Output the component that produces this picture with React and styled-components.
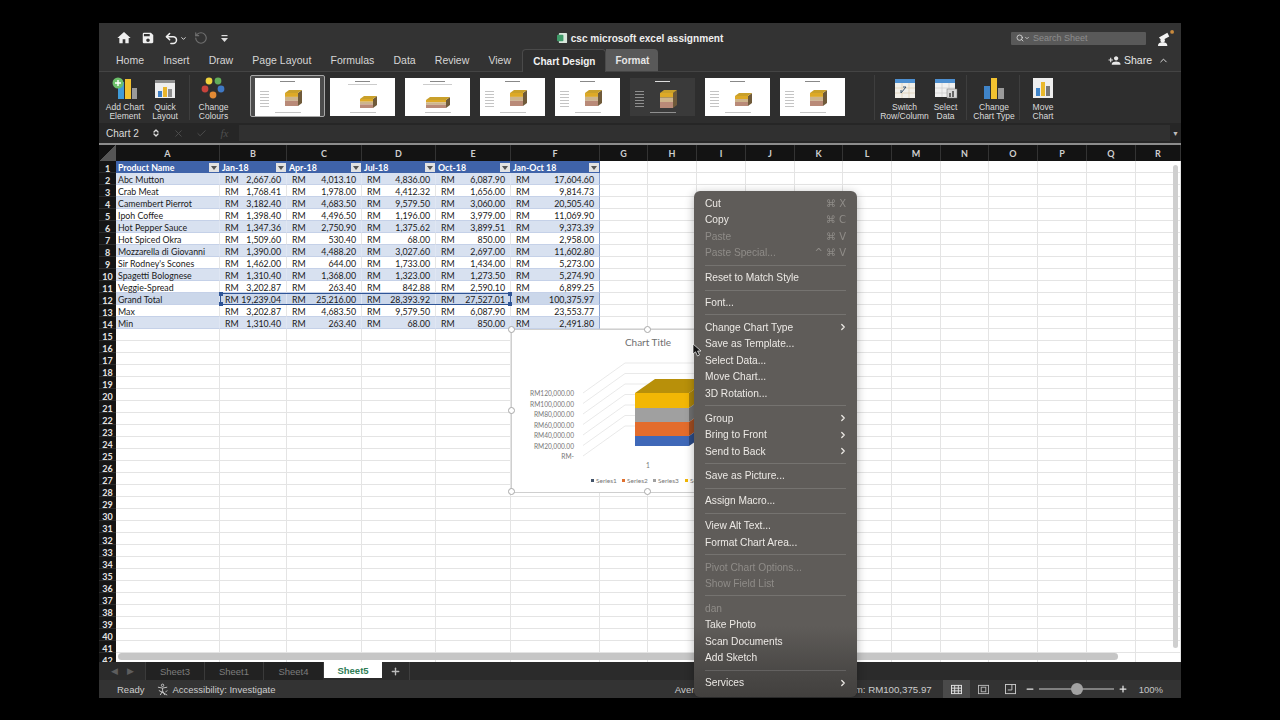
import React from "react";
import styled, { createGlobalStyle } from "styled-components";
import { ChevronRight, ChevronUp, ChevronDown, Plus, Minus, Search, X, Check, Undo2, RotateCcw } from "lucide-react";
import { MdHome, MdSave, MdPersonAdd } from "react-icons/md";

const GlobalStyle = createGlobalStyle`
  html, body {
    margin: 0;
    background: #000;
    overflow: hidden;
  }
  * { box-sizing: border-box; }
`;

const Page = styled.div`
  width: 1280px;
  height: 720px;
  padding: 23px 99px 22px;
  background: #000;
  font-family: "Liberation Sans", Arial, sans-serif;
`;

const Window = styled.div`
  position: relative;
  display: flex;
  flex-direction: column;
  height: 675px;
  background: #2e2e2e;
  filter: blur(0.45px);
`;

// title bar
const TitleBar = styled.div`
  display: grid;
  grid-template-columns: 1fr auto 1fr;
  align-items: center;
  height: 26px;
  padding-top: 4px;
  background: #333;
  color: #eee;
`;

const QuickIcons = styled.div`
  display: flex;
  align-items: center;
  padding-left: 17px;
`;

const QuickBtn = styled.span`
  display: flex;
  align-items: center;
  color: ${(p) => (p.$dim ? "#6f6f6f" : "#f0f0f0")};
  margin-right: ${(p) => p.$gap || 0}px;
`;

const Title = styled.div`
  display: flex;
  align-items: center;
  gap: 3px;
  font-size: 10.1px;
  font-weight: 700;
  color: #eee;
`;

const TitleRight = styled.div`
  display: flex;
  justify-content: flex-end;
  align-items: center;
  padding-right: 6px;
`;

const SearchBox = styled.div`
  display: flex;
  align-items: center;
  width: 135px;
  height: 13px;
  margin-right: 10px;
  padding-left: 5px;
  background: #595959;
  border-radius: 1px;
  color: #ddd;
  font-size: 9px;
  span {
    margin-left: 3px;
    color: #8d8d8d;
  }
`;

// tab row
const TabRow = styled.div`
  display: flex;
  align-items: stretch;
  height: 23px;
  background: #333;
  border-bottom: 1px solid #444;
  padding-left: 17px;
  font-size: 10.5px;
  color: #d6d6d6;
`;

const Tab = styled.div`
  display: flex;
  align-items: center;
  margin-right: 19.2px;
`;

const ActiveTab = styled.div`
  display: flex;
  align-items: center;
  height: 23px;
  margin-left: -8px;
  padding: 0 10px;
  background: #2e2e2e;
  border: 1px solid #4a4a4a;
  border-bottom: none;
  border-radius: 4px 4px 0 0;
  color: #f2f2f2;
  font-weight: 700;
  font-size: 10px;
`;

const ContextTab = styled.div`
  display: flex;
  align-items: center;
  height: 22px;
  padding: 0 9px;
  background: #595959;
  border-radius: 0 4px 0 0;
  color: #e6e6e6;
  font-weight: 700;
  font-size: 10px;
`;

const ShareBox = styled.div`
  margin-left: auto;
  padding-right: 12px;
  display: flex;
  align-items: center;
  gap: 3px;
  color: #e8e8e8;
  font-size: 10.5px;
`;

// ribbon
const Ribbon = styled.div`
  display: flex;
  height: 51px;
  background: #2e2e2e;
`;

const RibbonBtn = styled.div`
  width: ${(p) => p.$w}px;
  display: flex;
  flex-direction: column;
  align-items: center;
  padding-top: 5px;
  color: #dcdcdc;
  font-size: 8.5px;
  line-height: 9px;
  text-align: center;
  white-space: nowrap;
  svg {
    display: block;
    height: 22px;
    margin-bottom: 4px;
  }
`;

const RibbonSep = styled.div`
  width: 1px;
  height: 45px;
  margin: 3px ${(p) => p.$r || 0}px 0 ${(p) => p.$l || 0}px;
  background: #3e3e3e;
`;

const Gallery = styled.div`
  display: flex;
  align-items: flex-start;
  padding-top: 3px;
  margin-left: 13px;
  margin-right: 24px;
  background: #2e2e2e;
`;

const ThumbCell = styled.div`
  width: 75px;
  height: 42px;
  padding: 2px 4px;
  border-radius: 2px;
  border: 1px solid ${(p) => (p.$on ? "#a8a8a8" : "transparent")};
  background: ${(p) => (p.$on ? "#4c4c4c" : "transparent")};
  svg {
    display: block;
    width: 65px;
    height: 38px;
  }
`;

// formula bar
const FormulaBar = styled.div`
  display: flex;
  align-items: center;
  height: 22px;
  background: #262626;
  border-bottom: 2px solid #8c8c8c;
`;

const NameBox = styled.div`
  width: 53px;
  padding-left: 7px;
  font-size: 10px;
  color: #dcdcdc;
`;

const Spinner = styled.div`
  display: flex;
  flex-direction: column;
  width: 15px;
  color: #ddd;
  svg {
    margin: -2px 0;
  }
`;

const FxBtn = styled.span`
  display: flex;
  justify-content: center;
  width: 23px;
  color: #4f4f4f;
  font-family: "Liberation Serif", serif;
  font-style: italic;
  font-size: 11px;
`;

const FormulaInput = styled.div`
  flex: 1;
  height: 16px;
  margin-left: 3px;
  background: #303030;
`;

const FormulaCaret = styled.div`
  width: 11px;
  text-align: center;
  color: #bdbdbd;
  font-size: 7px;
`;

// sheet
const Sheet = styled.div`
  position: relative;
  flex: 1;
  overflow: hidden;
  display: grid;
  grid-template-columns: 17px 104px 67px 75px 74px 75px 89px 48px 49px 49px 49px 48px 49px 49px 48px 49px 49px 49px 45px;
  grid-template-rows: 16px;
  grid-auto-rows: 12px;
  background: #fff;
  font-family: Lato, "Liberation Sans", sans-serif;
`;

const Corner = styled.div`
  background: linear-gradient(135deg, #111 50%, #555 50%);
`;

const ColHead = styled.div`
  display: flex;
  align-items: center;
  justify-content: center;
  background: #131313;
  border-right: 1px solid #333;
  color: #cfcfcf;
  font-size: 9px;
  font-weight: 700;
`;

const RowHead = styled.div`
  display: flex;
  align-items: center;
  justify-content: center;
  padding-top: 3px;
  background: #151515;
  border-bottom: 1px solid #2c2c2c;
  color: #e4e4e4;
  font-size: 9px;
  font-weight: 700;
  line-height: 1;
`;

const Blank = styled.div`
  border-right: 1px solid #e4e4e4;
  border-bottom: 1px solid #e4e4e4;
`;

const Cell = styled.div`
  display: flex;
  align-items: center;
  justify-content: space-between;
  padding: 3px ${(p) => (p.$money ? 5 : 2)}px 0;
  background: ${(p) => (p.$tone === "sel" ? "#cbd7ea" : p.$tone === "band" ? "#d8e1f0" : "#fff")};
  border-right: 1px solid ${(p) => (p.$edge ? "#8ea6d4" : p.$tone === "plain" ? "#e6e6e6" : "#dfe6f3")};
  border-bottom: 1px solid #c5d1e8;
  color: #1a1a1a;
  font-size: 8.8px;
  line-height: 1;
  white-space: nowrap;
`;

const HeadCell = styled.div`
  position: relative;
  display: flex;
  align-items: center;
  padding: 1px 0 0 2px;
  background: #3f63a9;
  color: #fff;
  font-size: 8.8px;
  font-weight: 700;
  white-space: nowrap;
`;

const FilterBtn = styled.span`
  position: absolute;
  top: 2px;
  right: 1px;
  width: 10px;
  height: 9px;
  background: #e2e2e2;
  &::after {
    content: "";
    position: absolute;
    left: 2px;
    top: 3px;
    border: 3px solid transparent;
    border-top: 4px solid #555;
  }
`;

const Selection = styled.div`
  position: absolute;
  left: 121px;
  top: 148px;
  width: 291px;
  height: 12px;
  border: 1px solid #2f5597;
`;

const SelDot = styled.span`
  position: absolute;
  width: 4px;
  height: 4px;
  background: #2f5597;
  left: ${(p) => (p.$right ? "auto" : "-2px")};
  right: ${(p) => (p.$right ? "-2px" : "auto")};
  top: ${(p) => (p.$bottom ? "auto" : "-2px")};
  bottom: ${(p) => (p.$bottom ? "-2px" : "auto")};
`;

const ChartBox = styled.div`
  position: absolute;
  left: 412px;
  top: 184px;
  width: 274px;
  height: 164px;
  background: #fff;
  border: 1px solid #cfcfcf;
  svg {
    display: block;
  }
`;

const Handle = styled.span`
  position: absolute;
  width: 7px;
  height: 7px;
  margin: -4px 0 0 -4px;
  left: ${(p) => p.$x}%;
  top: ${(p) => p.$y}%;
  background: #fff;
  border: 1px solid #a8a8a8;
  border-radius: 50%;
`;

const HScroll = styled.div`
  position: absolute;
  left: 19px;
  bottom: 2px;
  width: 1000px;
  height: 7px;
  border-radius: 4px;
  background: #c6c6c6;
`;

const VScroll = styled.div`
  position: absolute;
  right: 3px;
  top: 20px;
  width: 5px;
  height: 483px;
  border-radius: 3px;
  background: #cfcfcf;
`;

// sheet tabs
const SheetTabs = styled.div`
  display: flex;
  height: 18px;
  background: #2b2b2b;
  font-size: 9.5px;
  color: #7c7c7c;
`;

const TabNav = styled.div`
  width: 46px;
  display: flex;
  align-items: center;
  justify-content: center;
  gap: 9px;
  color: #5d5d5d;
  font-size: 9px;
`;

const SheetTab = styled.div`
  width: ${(p) => p.$w}px;
  display: flex;
  align-items: center;
  justify-content: center;
  height: ${(p) => (p.$on ? 16 : 18)}px;
  background: ${(p) => (p.$on ? "#fff" : "#222")};
  color: ${(p) => (p.$on ? "#2f7d55" : "#7c7c7c")};
  font-weight: ${(p) => (p.$on ? 700 : 400)};
  border-left: 1px solid #3a3a3a;
`;

const AddTab = styled.div`
  width: 28px;
  display: flex;
  align-items: center;
  justify-content: center;
  border-right: 1px solid #3f3f3f;
  color: #bcbcbc;
`;

// status bar
const StatusBar = styled.div`
  display: flex;
  align-items: center;
  height: 18px;
  background: #333;
  color: #cdcdcd;
  font-size: 9.5px;
`;

const StatusText = styled.span`
  margin-left: ${(p) => p.$l || 0}px;
  display: flex;
  align-items: center;
  gap: 2px;
  white-space: nowrap;
`;

const Stats = styled.div`
  margin-left: auto;
  display: flex;
  gap: 16px;
  white-space: nowrap;
  margin-right: 11px;
  font-size: 9.7px;
`;

const ViewBtn = styled.div`
  width: 27px;
  height: 18px;
  display: flex;
  align-items: center;
  justify-content: center;
  background: ${(p) => (p.$on ? "#4a4a4a" : "transparent")};
`;

const Zoom = styled.div`
  display: flex;
  align-items: center;
  margin-left: 1px;
  color: #e6e6e6;
  gap: 4px;
`;

const Slider = styled.div`
  position: relative;
  width: 75px;
  height: 2px;
  background: #7f7f7f;
  &::after {
    content: "";
    position: absolute;
    left: 32px;
    top: -5px;
    width: 12px;
    height: 12px;
    border-radius: 50%;
    background: #a2a2a2;
  }
`;

const Percent = styled.span`
  margin-left: 11px;
  margin-right: 18px;
  color: #c6c6c6;
`;

// context menu
const Menu = styled.div`
  position: absolute;
  left: 595px;
  top: 168px;
  width: 163px;
  padding: 4px 0 6px;
  border-radius: 6px;
  background: linear-gradient(#5f5c59 0, #5f5c59 86%, #4a4846 95%, #42403e 100%);
  box-shadow: 0 2px 10px rgba(0, 0, 0, 0.3);
`;

const MenuRow = styled.div`
  display: flex;
  align-items: center;
  justify-content: space-between;
  height: 16.5px;
  padding: 0 9px 0 11px;
  font-size: 10.2px;
  color: ${(p) => (p.$off ? "#8f8c88" : "#ece9e5")};
`;

const MenuKey = styled.span`
  font-family: "DejaVu Sans", sans-serif;
  font-size: 10px;
  margin-right: 2px;
  color: #8f8c88;
`;

const MenuSep = styled.div`
  height: 8.35px;
  margin: 0 11px;
  display: flex;
  align-items: center;
  &::after {
    content: "";
    flex: 1;
    height: 1px;
    background: rgba(255, 255, 255, 0.14);
  }
`;

const Pointer = styled.svg`
  position: absolute;
  left: 593px;
  top: 320px;
`;

const AddChartIcon = () => (
  <svg viewBox="0 0 26 22" width="26">
    <rect x="6" y="5" width="6" height="17" fill="#3f9bd8" />
    <rect x="13" y="2" width="6" height="20" fill="#f2c230" />
    <rect x="20" y="11" width="5" height="11" fill="#9a9a9a" />
    <circle cx="6" cy="6" r="5.5" fill="#6cbf6a" />
    <path d="M6 3v6M3 6h6" stroke="#fff" strokeWidth="1.4" />
  </svg>
);

const QuickLayoutIcon = () => (
  <svg viewBox="0 0 22 22" width="22">
    <rect x="1" y="3" width="20" height="18" fill="#eee" />
    <rect x="1" y="3" width="20" height="3" fill="#8f8f8f" />
    <rect x="4" y="14" width="4" height="6" fill="#3f7fc4" />
    <rect x="9" y="10" width="4" height="10" fill="#e9b52c" />
    <rect x="14" y="12" width="4" height="8" fill="#8f8f8f" />
  </svg>
);

const ColoursIcon = () => (
  <svg viewBox="0 0 26 22" width="26">
    <circle cx="8" cy="4" r="3.4" fill="#f0d23c" />
    <circle cx="17" cy="4" r="3.4" fill="#62ad5a" />
    <circle cx="4" cy="12" r="3.4" fill="#c7433c" />
    <circle cx="20" cy="12" r="3.4" fill="#3f78c4" />
    <circle cx="12" cy="18" r="3.4" fill="#e28a34" />
  </svg>
);

const SwitchIcon = () => (
  <svg viewBox="0 0 22 22" width="22">
    <rect x="1" y="2" width="20" height="19" fill="#f1efe9" />
    <rect x="1" y="2" width="20" height="4" fill="#4d8fd0" />
    <path d="M1 11h20M1 16h20M8 6v15M15 6v15" stroke="#d9c7a8" strokeWidth="0.6" />
    <path d="M7 16l5-6M12 10h-3M7 16v-3" stroke="#33506f" strokeWidth="1" fill="none" />
  </svg>
);

const SelectDataIcon = () => (
  <svg viewBox="0 0 24 22" width="24">
    <rect x="1" y="2" width="20" height="18" fill="#f1f1f1" />
    <rect x="1" y="2" width="20" height="4" fill="#4d8fd0" />
    <path d="M1 11h20M1 16h20M8 6v14M15 6v14" stroke="#c8c8c8" strokeWidth="0.6" />
    <rect x="13" y="12" width="10" height="9" fill="#dadada" stroke="#777" strokeWidth="0.5" />
    <rect x="15" y="16" width="2" height="4" fill="#666" />
    <rect x="18" y="14" width="2" height="6" fill="#666" />
  </svg>
);

const ChartTypeIcon = () => (
  <svg viewBox="0 0 24 22" width="24">
    <rect x="2" y="9" width="6" height="13" fill="#3f84c9" />
    <rect x="9" y="1" width="6" height="21" fill="#f2c230" />
    <rect x="16" y="11" width="6" height="11" fill="#9a9a9a" />
  </svg>
);

const MoveChartIcon = () => (
  <svg viewBox="0 0 22 22" width="22">
    <rect x="1" y="1" width="20" height="20" fill="#eee" />
    <rect x="4" y="11" width="4" height="8" fill="#3f84c9" />
    <rect x="9" y="5" width="4" height="14" fill="#eab92c" />
    <rect x="14" y="9" width="4" height="10" fill="#777" />
  </svg>
);

const ExcelIcon = () => (
  <svg viewBox="0 0 12 13" width="11" height="12">
    <rect x="2" y="1" width="9" height="11" rx="1" fill="#d9e6dc" />
    <rect x="0" y="3" width="7" height="7" rx="1" fill="#3f9a68" />
  </svg>
);

const PresenterIcon = () => (
  <svg viewBox="0 0 20 18" width="19" height="17">
    <path d="M3 8l9-5 2 4-8 4z" fill="#f2f2f2" />
    <circle cx="7" cy="11" r="2.4" fill="#f2f2f2" />
    <path d="M2 17c0-3 2-4 5-4s5 1 5 4z" fill="#f2f2f2" />
    <circle cx="17" cy="2" r="2" fill="#c98a3d" />
  </svg>
);

const MoreIcon = () => (
  <svg viewBox="0 0 9 9" width="9" height="9" fill="#ddd">
    <rect x="1.5" y="1" width="6" height="1.2" />
    <path d="M1 4h7L4.5 8z" />
  </svg>
);

const AccessIcon = () => (
  <svg viewBox="0 0 14 14" width="13" height="13" fill="none" stroke="#c9c9c9" strokeWidth="1">
    <circle cx="6" cy="2.5" r="1.3" />
    <path d="M1 4.5l5 1 5-1M6 5.5v3M3.5 13L6 8.5l2.5 4.5M2 8l9 5M11 8l-2 2" />
  </svg>
);

const NormalIcon = () => (
  <svg viewBox="0 0 12 12" width="11" height="11" fill="none" stroke="#e6e6e6" strokeWidth="1">
    <rect x="0.5" y="1.5" width="11" height="9" />
    <path d="M0.5 4.5h11M0.5 7.5h11M4 1.5v9M8 1.5v9" />
  </svg>
);

const LayoutIcon = () => (
  <svg viewBox="0 0 12 12" width="11" height="11" fill="none" stroke="#bbb" strokeWidth="1">
    <rect x="0.5" y="1.5" width="11" height="9" />
    <rect x="3.5" y="3.5" width="5" height="5" />
  </svg>
);

const BreakIcon = () => (
  <svg viewBox="0 0 12 12" width="11" height="11" fill="none" stroke="#ccc" strokeWidth="1">
    <rect x="0.5" y="0.5" width="11" height="10" />
    <path d="M7.5 0.5v6H3" />
  </svg>
);

// tiny previews of the chart styles
const ChartThumb = ({ dark, labels, subtitle, bx, by, bw, bh }) => {
  const ink = dark ? "#8f8f8f" : "#c4c4c4";
  return (
    <svg viewBox="0 0 65 38">
      <rect width="65" height="38" fill={dark ? "#3a3a3a" : "#fff"} />
      <rect x="25" y="3" width="15" height="1" fill={dark ? "#ddd" : "#888"} />
      {subtitle && <rect x="18" y="6" width="29" height="1" fill="#ccc" />}
      {labels &&
        [13, 16, 19, 22, 25, 28].map((y) => (
          <rect key={y} x="5" y={y} width="9" height="1" fill={ink} />
        ))}
      <path d={`M${bx + bw} ${by}l4-3v${bh}l-4 3z`} fill="#6f5a3a" />
      <rect x={bx} y={by} width={bw} height={bh * 0.3} fill="#dda926" />
      <rect x={bx} y={by + bh * 0.3} width={bw} height={bh * 0.3} fill="#cdb48c" />
      <rect x={bx} y={by + bh * 0.6} width={bw} height={bh * 0.4} fill="#b98a78" />
      <path d={`M${bx} ${by}l4-3h${bw}l-4 3z`} fill="#c9a02a" />
      <rect x="20" y="34" width="26" height="1" fill={ink} />
    </svg>
  );
};

const thumbs = [
  { on: true, labels: true, bx: 30, by: 15, bw: 13, bh: 13 },
  { subtitle: true, bx: 30, by: 21, bw: 13, bh: 9 },
  { subtitle: true, bx: 21, by: 22, bw: 20, bh: 8 },
  { labels: true, bx: 30, by: 15, bw: 13, bh: 13 },
  { labels: true, bx: 30, by: 15, bw: 13, bh: 13 },
  { dark: true, labels: true, bx: 30, by: 15, bw: 13, bh: 15 },
  { labels: true, bx: 30, by: 18, bw: 13, bh: 10 },
  { labels: true, bx: 30, by: 15, bw: 13, bh: 13 },
];

const columns = "ABCDEFGHIJKLMNOPQR".split("");

const headers = ["Product Name", "Jan-18", "Apr-18", "Jul-18", "Oct-18", "Jan-Oct 18"];

const rows = [
  ["Abc Mutton", "2,667.60", "4,013.10", "4,836.00", "6,087.90", "17,604.60"],
  ["Crab Meat", "1,768.41", "1,978.00", "4,412.32", "1,656.00", "9,814.73"],
  ["Camembert Pierrot", "3,182.40", "4,683.50", "9,579.50", "3,060.00", "20,505.40"],
  ["Ipoh Coffee", "1,398.40", "4,496.50", "1,196.00", "3,979.00", "11,069.90"],
  ["Hot Pepper Sauce", "1,347.36", "2,750.90", "1,375.62", "3,899.51", "9,373.39"],
  ["Hot Spiced Okra", "1,509.60", "530.40", "68.00", "850.00", "2,958.00"],
  ["Mozzarella di Giovanni", "1,390.00", "4,488.20", "3,027.60", "2,697.00", "11,602.80"],
  ["Sir Rodney's Scones", "1,462.00", "644.00", "1,733.00", "1,434.00", "5,273.00"],
  ["Spagetti Bolognese", "1,310.40", "1,368.00", "1,323.00", "1,273.50", "5,274.90"],
  ["Veggie-Spread", "3,202.87", "263.40", "842.88", "2,590.10", "6,899.25"],
  ["Grand Total", "19,239.04", "25,216.00", "28,393.92", "27,527.01", "100,375.97"],
  ["Max", "3,202.87", "4,683.50", "9,579.50", "6,087.90", "23,553.77"],
  ["Min", "1,310.40", "263.40", "68.00", "850.00", "2,491.80"],
];

const menu = [
  { t: "Cut", k: "⌘ X" },
  { t: "Copy", k: "⌘ C" },
  { t: "Paste", k: "⌘ V", off: true },
  { t: "Paste Special...", k: "^ ⌘ V", off: true },
  null,
  { t: "Reset to Match Style" },
  null,
  { t: "Font..." },
  null,
  { t: "Change Chart Type", sub: true },
  { t: "Save as Template..." },
  { t: "Select Data..." },
  { t: "Move Chart..." },
  { t: "3D Rotation..." },
  null,
  { t: "Group", sub: true },
  { t: "Bring to Front", sub: true },
  { t: "Send to Back", sub: true },
  null,
  { t: "Save as Picture..." },
  null,
  { t: "Assign Macro..." },
  null,
  { t: "View Alt Text..." },
  { t: "Format Chart Area..." },
  null,
  { t: "Pivot Chart Options...", off: true },
  { t: "Show Field List", off: true },
  null,
  { t: "dan", off: true },
  { t: "Take Photo" },
  { t: "Scan Documents" },
  { t: "Add Sketch" },
  null,
  { t: "Services", sub: true },
];

const axis = ["RM120,000.00", "RM100,000.00", "RM80,000.00", "RM60,000.00", "RM40,000.00", "RM20,000.00", "RM-"];

const legend = [
  ["Series1", 79, "#44546a"],
  ["Series2", 110, "#e0702e"],
  ["Series3", 141, "#a0a0a0"],
  ["Series4", 173, "#f2b705"],
];

// front face slices of the 3D column: y, height, front colour, side colour
const slices = [
  [63, 15, "#f2b705", "#a8820a"],
  [78, 14, "#a0a0a0", "#6f6f6f"],
  [92, 14, "#e36c2c", "#a04c20"],
  [106, 10, "#3f68b8", "#2b4a85"],
];

// chart coordinates are relative to the chart box
const ChartDrawing = () => (
  <svg width="272" height="162" viewBox="0 0 272 162">
    <text x="136" y="16" textAnchor="middle" fontSize="10" fill="#6f6f6f" fontFamily="Lato, sans-serif">
      Chart Title
    </text>
    {axis.map((label, i) => {
      const y = 63 + i * 10.5;
      return (
        <g key={label}>
          <text x="62" y={y + 3} textAnchor="end" fontSize="6.6" fill="#777" fontFamily="Lato, sans-serif">
            {label}
          </text>
          <path d={`M71 ${y}L113 ${y - 30}H272`} stroke="#e3e3e3" strokeWidth="0.8" fill="none" />
        </g>
      );
    })}
    <path d="M123 63l20-14h54l-20 14z" fill="#b8900a" />
    {slices.map(([y, h, front, side]) => (
      <g key={y}>
        <rect x="123" y={y} width="54" height={h} fill={front} />
        <path d={`M177 ${y}l20-14v${h}l-20 14z`} fill={side} />
      </g>
    ))}
    <text x="136" y="138" textAnchor="middle" fontSize="6.6" fill="#777" fontFamily="Lato, sans-serif">
      1
    </text>
    {legend.map(([name, x, color]) => (
      <g key={name}>
        <rect x={x} y="149" width="3" height="3" fill={color} />
        <text x={x + 5} y="153" fontSize="6.5" fill="#777" fontFamily="Lato, sans-serif">
          {name}
        </text>
      </g>
    ))}
  </svg>
);

const handles = [
  [0, 0], [50, 0], [100, 0],
  [0, 50], [100, 50],
  [0, 100], [50, 100], [100, 100],
];

const tableRow = (row, i) => {
  const tone = i === 10 ? "sel" : i % 2 === 0 ? "band" : "plain";
  return row.map((value, c) =>
    c === 0 ? (
      <Cell key={c} $tone={tone}>{value}</Cell>
    ) : (
      <Cell key={c} $money $tone={tone} $edge={c === 5}>
        <span>RM</span>
        <span>{value}</span>
      </Cell>
    )
  );
};

export default function App() {
  const total = 42;
  return (
    <Page>
      <GlobalStyle />
      <Window>
        <TitleBar>
          <QuickIcons>
            <QuickBtn $gap={9}><MdHome size={16} /></QuickBtn>
            <QuickBtn $gap={9}><MdSave size={14} /></QuickBtn>
            <QuickBtn $gap={1}><Undo2 size={15} strokeWidth={2.4} /></QuickBtn>
            <QuickBtn $gap={7}><ChevronDown size={7} strokeWidth={3} /></QuickBtn>
            <QuickBtn $dim $gap={12}><RotateCcw size={14} strokeWidth={2} /></QuickBtn>
            <QuickBtn><MoreIcon /></QuickBtn>
          </QuickIcons>
          <Title>
            <ExcelIcon />
            csc microsoft excel assignment
          </Title>
          <TitleRight>
            <SearchBox>
              <Search size={8} strokeWidth={2.5} />
              <ChevronDown size={6} strokeWidth={3} />
              <span>Search Sheet</span>
            </SearchBox>
            <PresenterIcon />
          </TitleRight>
        </TitleBar>

        <TabRow>
          {["Home", "Insert", "Draw", "Page Layout", "Formulas", "Data", "Review", "View"].map((t) => (
            <Tab key={t}>{t}</Tab>
          ))}
          <ActiveTab>Chart Design</ActiveTab>
          <ContextTab>Format</ContextTab>
          <ShareBox>
            <MdPersonAdd size={13} />
            Share
            <ChevronUp size={11} style={{ marginLeft: 3 }} />
          </ShareBox>
        </TabRow>

        <Ribbon>
          <RibbonBtn $w={50} style={{ marginLeft: 1 }}>
            <AddChartIcon />
            Add Chart
            <br />
            Element
          </RibbonBtn>
          <RibbonBtn $w={30}>
            <QuickLayoutIcon />
            Quick
            <br />
            Layout
          </RibbonBtn>
          <RibbonSep $l={9} />
          <RibbonBtn $w={47}>
            <ColoursIcon />
            Change
            <br />
            Colours
          </RibbonBtn>
          <Gallery>
            {thumbs.map((t, i) => (
              <ThumbCell key={i} $on={t.on}>
                <ChartThumb {...t} />
              </ThumbCell>
            ))}
          </Gallery>
          <RibbonSep $r={5} />
          <RibbonBtn $w={49}>
            <SwitchIcon />
            Switch
            <br />
            Row/Column
          </RibbonBtn>
          <RibbonBtn $w={33}>
            <SelectDataIcon />
            Select
            <br />
            Data
          </RibbonBtn>
          <RibbonSep $l={4} $r={2} />
          <RibbonBtn $w={50}>
            <ChartTypeIcon />
            Change
            <br />
            Chart Type
          </RibbonBtn>
          <RibbonSep $r={3} />
          <RibbonBtn $w={40}>
            <MoveChartIcon />
            Move
            <br />
            Chart
          </RibbonBtn>
        </Ribbon>

        <FormulaBar>
          <NameBox>Chart 2</NameBox>
          <Spinner>
            <ChevronUp size={8} strokeWidth={4} />
            <ChevronDown size={8} strokeWidth={4} />
          </Spinner>
          <FxBtn><X size={11} /></FxBtn>
          <FxBtn><Check size={11} /></FxBtn>
          <FxBtn>fx</FxBtn>
          <FormulaInput />
          <FormulaCaret>▼</FormulaCaret>
        </FormulaBar>

        <Sheet>
          <Corner />
          {columns.map((c) => (
            <ColHead key={c}>{c}</ColHead>
          ))}
          {Array.from({ length: total }, (_, r) => (
            <React.Fragment key={r}>
              <RowHead>{r + 1}</RowHead>
              {r === 0 &&
                headers.map((h) => (
                  <HeadCell key={h}>
                    {h}
                    <FilterBtn />
                  </HeadCell>
                ))}
              {r > 0 && r < 14 && tableRow(rows[r - 1], r - 1)}
              {columns.slice(r < 14 ? 6 : 0).map((c) => (
                <Blank key={c} />
              ))}
            </React.Fragment>
          ))}
          <Selection>
            <SelDot />
            <SelDot $right />
            <SelDot $bottom />
            <SelDot $right $bottom />
          </Selection>
          <ChartBox>
            <ChartDrawing />
            {handles.map(([x, y]) => (
              <Handle key={`${x}-${y}`} $x={x} $y={y} />
            ))}
          </ChartBox>
          <HScroll />
          <VScroll />
        </Sheet>

        <SheetTabs>
          <TabNav>
            <span>◀</span>
            <span>▶</span>
          </TabNav>
          <SheetTab $w={59}>Sheet3</SheetTab>
          <SheetTab $w={59}>Sheet1</SheetTab>
          <SheetTab $w={60}>Sheet4</SheetTab>
          <SheetTab $w={59} $on>Sheet5</SheetTab>
          <AddTab><Plus size={11} strokeWidth={3} /></AddTab>
        </SheetTabs>

        <StatusBar>
          <StatusText $l={18}>Ready</StatusText>
          <StatusText $l={13}>
            <AccessIcon />
            Accessibility: Investigate
          </StatusText>
          <Stats>
            <span>Average: RM25,093.99</span>
            <span>Count: 4</span>
            <span>Sum: RM100,375.97</span>
          </Stats>
          <ViewBtn $on><NormalIcon /></ViewBtn>
          <ViewBtn><LayoutIcon /></ViewBtn>
          <ViewBtn><BreakIcon /></ViewBtn>
          <Zoom>
            <Minus size={10} strokeWidth={3} />
            <Slider />
            <Plus size={10} strokeWidth={3} />
          </Zoom>
          <Percent>100%</Percent>
        </StatusBar>

        <Menu>
          {menu.map((item, i) =>
            item ? (
              <MenuRow key={i} $off={item.off}>
                <span>{item.t}</span>
                {item.k && <MenuKey>{item.k}</MenuKey>}
                {item.sub && <ChevronRight size={10} strokeWidth={3} />}
              </MenuRow>
            ) : (
              <MenuSep key={i} />
            )
          )}
        </Menu>

        <Pointer width="10" height="14" viewBox="0 0 10 14">
          <path d="M1 1v10l2.5-2.2L5.5 13l2-1L5.6 8H9z" fill="#111" stroke="#fff" strokeWidth="0.7" />
        </Pointer>
      </Window>
    </Page>
  );
}
